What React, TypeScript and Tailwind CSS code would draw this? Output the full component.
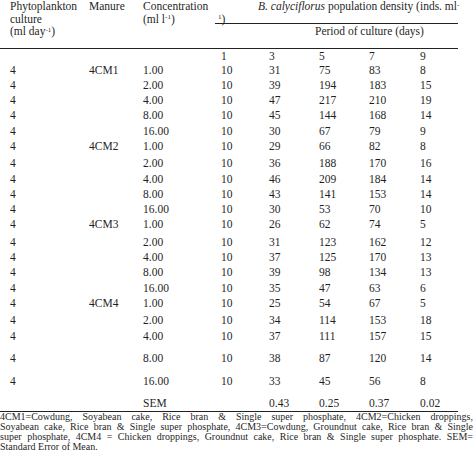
const groups = [
  {
    name: '4CM1',
    rows: [
      ['1.00', '31', '75', '83', '8'],
      ['2.00', '39', '194', '183', '15'],
      ['4.00', '47', '217', '210', '19'],
      ['8.00', '45', '144', '168', '14'],
      ['16.00', '30', '67', '79', '9'],
    ],
  },
  {
    name: '4CM2',
    rows: [
      ['1.00', '29', '66', '82', '8'],
      ['2.00', '36', '188', '170', '16'],
      ['4.00', '46', '209', '184', '14'],
      ['8.00', '43', '141', '153', '14'],
      ['16.00', '30', '53', '70', '10'],
    ],
  },
  {
    name: '4CM3',
    rows: [
      ['1.00', '26', '62', '74', '5'],
      ['2.00', '31', '123', '162', '12'],
      ['4.00', '37', '125', '170', '13'],
      ['8.00', '39', '98', '134', '13'],
      ['16.00', '35', '47', '63', '6'],
    ],
  },
  {
    name: '4CM4',
    rows: [
      ['1.00', '25', '54', '67', '5'],
      ['2.00', '34', '114', '153', '18'],
      ['4.00', '37', '111', '157', '15'],
      ['8.00', '38', '87', '120', '14'],
      ['16.00', '33', '45', '56', '8'],
    ],
  },
];

// row heights read off the scan (pitch between text lines)
const heights = [
  'h-[15px]', 'h-[15px]', 'h-[15px]', 'h-[16px]', 'h-[15px]',
  'h-[17px]', 'h-[16px]', 'h-[15px]', 'h-[15px]', 'h-[15px]',
  'h-[18px]', 'h-[15px]', 'h-[15px]', 'h-[16px]', 'h-[15px]',
  'h-[17px]', 'h-[16px]', 'h-[22px]', 'h-[23px]', 'h-[22px]',
];

const cols = 'grid grid-cols-[89px_54px_78px_48px_50px_50px_51px_38px]';

export default function App() {
  const flat = groups.flatMap((g) => g.rows.map((r, i) => ({ manure: i === 0 ? g.name : '', r })));

  return (
    <div className="w-[474px] h-[461px] bg-white text-[#1f1f1f] font-['Liberation_Serif',serif] text-[11.5px] leading-[12.5px] overflow-hidden">
      <div className="w-[458px]">
        {/* header */}
        <div className="grid grid-cols-[89px_54px_72px_243px] h-[49px] border-b border-[#222]">
          <div className="pl-[10px]">
            <div>Phytoplankton</div>
            <div>culture</div>
            <div>
              (ml day<sup className="text-[7px]">-1</sup>)
            </div>
          </div>
          <div>Manure</div>
          <div>
            <div>Concentration</div>
            <div>
              (ml l<sup className="text-[7px]">-1</sup>)
            </div>
          </div>
          <div>
            <div className="h-[24px] border-b border-[#222]">
              <div className="pl-[43px] whitespace-nowrap">
                <i>B. calyciflorus</i> population density (inds. ml<sup className="text-[7px]">-</sup>
              </div>
              <div className="pl-[3px]">
                <sup className="text-[7px]">1</sup>)
              </div>
            </div>
            <div className="pl-[100px] pt-[1px] whitespace-nowrap">Period of culture (days)</div>
          </div>
        </div>

        {/* day numbers */}
        <div className={`${cols} h-[14px] leading-[15px]`}>
          <div />
          <div />
          <div />
          <div>1</div>
          <div>3</div>
          <div>5</div>
          <div>7</div>
          <div>9</div>
        </div>

        {flat.map((row, i) => (
          <div key={i} className={`${cols} ${heights[i]} leading-[15px]`}>
            <div className="pl-[10px]">4</div>
            <div>{row.manure}</div>
            <div>{row.r[0]}</div>
            <div>10</div>
            <div>{row.r[1]}</div>
            <div>{row.r[2]}</div>
            <div>{row.r[3]}</div>
            <div>{row.r[4]}</div>
          </div>
        ))}

        <div className={`${cols} h-[16px] leading-[15px] border-b border-[#222]`}>
          <div />
          <div />
          <div>SEM</div>
          <div />
          <div>0.43</div>
          <div>0.25</div>
          <div>0.37</div>
          <div>0.02</div>
        </div>
      </div>

      {/* footnote */}
      <div className="w-[473px] text-[10px] leading-[10px]">
        <div className="whitespace-nowrap text-justify [text-align-last:justify]">
          4CM1=Cowdung, Soyabean cake, Rice bran &amp; Single super phosphate, 4CM2=Chicken droppings,
        </div>
        <div className="whitespace-nowrap text-justify [text-align-last:justify]">
          Soyabean cake, Rice bran &amp; Single super phosphate, 4CM3=Cowdung, Groundnut cake, Rice bran &amp; Single
        </div>
        <div className="whitespace-nowrap text-justify [text-align-last:justify]">
          super phosphate, 4CM4 = Chicken droppings, Groundnut cake, Rice bran &amp; Single super phosphate. SEM=
        </div>
        <div className="whitespace-nowrap">Standard Error of Mean.</div>
      </div>
    </div>
  );
}
